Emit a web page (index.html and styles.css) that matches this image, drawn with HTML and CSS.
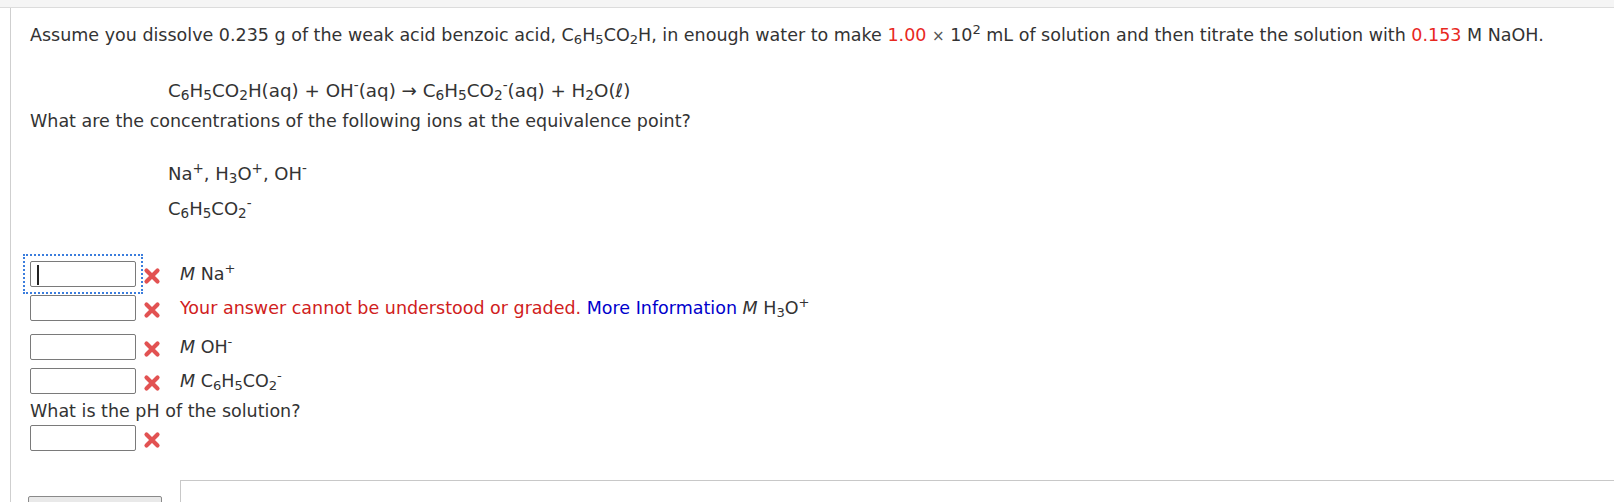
FILE: index.html
```html
<!DOCTYPE html>
<html>
<head>
<meta charset="utf-8">
<link rel="stylesheet" href="styles.css">
</head>
<body>
<div class="topbar"></div>
<div class="content">
  <p class="line intro">Assume you dissolve 0.235 g of the weak acid benzoic acid, C<sub>6</sub>H<sub>5</sub>CO<sub>2</sub>H, in enough water to make <span class="val">1.00</span> <span class="times">×</span> 10<sup>2</sup> mL of solution and then titrate the solution with <span class="val">0.153</span> M NaOH.</p>
  <p class="line equation">C<sub>6</sub>H<sub>5</sub>CO<sub>2</sub>H(aq) + OH<sup>-</sup>(aq) → C<sub>6</sub>H<sub>5</sub>CO<sub>2</sub><sup>-</sup>(aq) + H<sub>2</sub>O(ℓ)</p>
  <p class="line question">What are the concentrations of the following ions at the equivalence point?</p>
  <div class="ions">
    <p class="ion-line first">Na<sup>+</sup>, H<sub>3</sub>O<sup>+</sup>, OH<sup>-</sup></p>
    <p class="ion-line second">C<sub>6</sub>H<sub>5</sub>CO<sub>2</sub><sup>-</sup></p>
  </div>

  <div class="row row1">
    <span class="focus-wrap"><input class="field" type="text"><span class="caret"></span></span>
    <svg class="xmark" viewBox="0 0 18 18" width="18" height="18"><path d="M3.5 3.5 L14.5 14.5 M14.5 3.5 L3.5 14.5" stroke="#e25252" stroke-width="4.2" stroke-linecap="round" fill="none"/></svg>
    <span class="label"><i>M</i> Na<sup>+</sup></span>
  </div>
  <div class="row row2">
    <input class="field spaced" type="text">
    <svg class="xmark" viewBox="0 0 18 18" width="18" height="18"><path d="M3.5 3.5 L14.5 14.5 M14.5 3.5 L3.5 14.5" stroke="#e25252" stroke-width="4.2" stroke-linecap="round" fill="none"/></svg>
    <span class="label"><span class="err">Your answer cannot be understood or graded.</span> <a class="info">More Information</a> <i>M</i> H<sub>3</sub>O<sup>+</sup></span>
  </div>
  <div class="row row3">
    <input class="field spaced" type="text">
    <svg class="xmark" viewBox="0 0 18 18" width="18" height="18"><path d="M3.5 3.5 L14.5 14.5 M14.5 3.5 L3.5 14.5" stroke="#e25252" stroke-width="4.2" stroke-linecap="round" fill="none"/></svg>
    <span class="label"><i>M</i> OH<sup>-</sup></span>
  </div>
  <div class="row row4">
    <input class="field spaced" type="text">
    <svg class="xmark" viewBox="0 0 18 18" width="18" height="18"><path d="M3.5 3.5 L14.5 14.5 M14.5 3.5 L3.5 14.5" stroke="#e25252" stroke-width="4.2" stroke-linecap="round" fill="none"/></svg>
    <span class="label"><i>M</i> C<sub>6</sub>H<sub>5</sub>CO<sub>2</sub><sup>-</sup></span>
  </div>
  <p class="line ph">What is the pH of the solution?</p>
  <div class="row row5">
    <input class="field spaced" type="text">
    <svg class="xmark" viewBox="0 0 18 18" width="18" height="18"><path d="M3.5 3.5 L14.5 14.5 M14.5 3.5 L3.5 14.5" stroke="#e25252" stroke-width="4.2" stroke-linecap="round" fill="none"/></svg>
  </div>

  <div class="bottom">
    <button class="submit" type="button">Submit Answer</button>
    <div class="panel"></div>
  </div>
</div>
</body>
</html>
```
FILE: styles.css
```css
html, body {
  margin: 0;
  padding: 0;
  overflow: hidden;
  background: #fff;
}
body {
  font-family: "DejaVu Sans", Verdana, sans-serif;
  font-size: 17.5px;
  color: #333;
  height: 502px;
}
.topbar {
  height: 7px;
  background: #f5f5f5;
  border-bottom: 1px solid #dcdcdc;
}
.content {
  margin-left: 10px;
  border-left: 1px solid #cfcfcf;
  padding-left: 19px;
  padding-top: 17px;
  height: 600px;
}
.line {
  margin: 0;
  line-height: 20px;
  white-space: nowrap;
}
sup, sub {
  font-size: 75%;
  line-height: 0;
  position: relative;
  vertical-align: baseline;
}
sup { top: -0.5em; }
sub { bottom: -0.25em; }
.val { color: #e8281e; }
.times { color: #555; font-size: 15px; }
.equation {
  margin-top: 35px;
  margin-left: 138px;
  font-size: 18.3px;
}
.question {
  margin-top: 10px;
}
.ions {
  margin-left: 138px;
  font-size: 18px;
}
.ion-line {
  margin: 0;
  line-height: 22px;
}
.ion-line.first { margin-top: 32px; }
.ion-line.second { margin-top: 13px; }

.row {
  display: flex;
  align-items: center;
}
.row1 { margin-top: 34px; }
.row2 { margin-top: 1px; }
.row3 { margin-top: 13px; }
.row4 { margin-top: 8px; }
.row5 { margin-top: 4px; }
.ph { margin-top: 7px; }

.focus-wrap {
  position: relative;
  display: inline-flex;
  margin-left: -7px;
  padding: 5px;
  border: 2px dotted #3b7ddd;
}
.field {
  box-sizing: border-box;
  width: 106px;
  height: 26px;
  margin: 0;
  padding: 0 4px;
  border: 1px solid #7a7a7a;
  border-radius: 2px;
  background: #fff;
  font: inherit;
}
.field.spaced { margin-right: 7px; }
.caret {
  position: absolute;
  left: 12px;
  top: 9px;
  width: 2px;
  height: 20px;
  background: #222;
}
.xmark {
  flex: none;
  display: block;
  margin-top: 4px;
}
.label {
  margin-left: 19px;
  line-height: 20px;
  white-space: nowrap;
}
.err { color: #d02020; }
.info { color: #0000cc; text-decoration: none; }

.bottom {
  display: flex;
  align-items: flex-start;
  margin-top: 29px;
}
.submit {
  margin: 16px 0 0 -2px;
  width: 134px;
  height: 30px;
  padding: 4px 0 0;
  border: 1px solid #8a8a8a;
  border-radius: 2px;
  background: #e9e9e9;
  font: inherit;
  font-size: 14px;
  color: #333;
  text-align: center;
  flex: none;
}
.panel {
  margin-left: 18px;
  width: 1600px;
  height: 120px;
  border: 1px solid #c8c8c8;
  flex: none;
}
```
